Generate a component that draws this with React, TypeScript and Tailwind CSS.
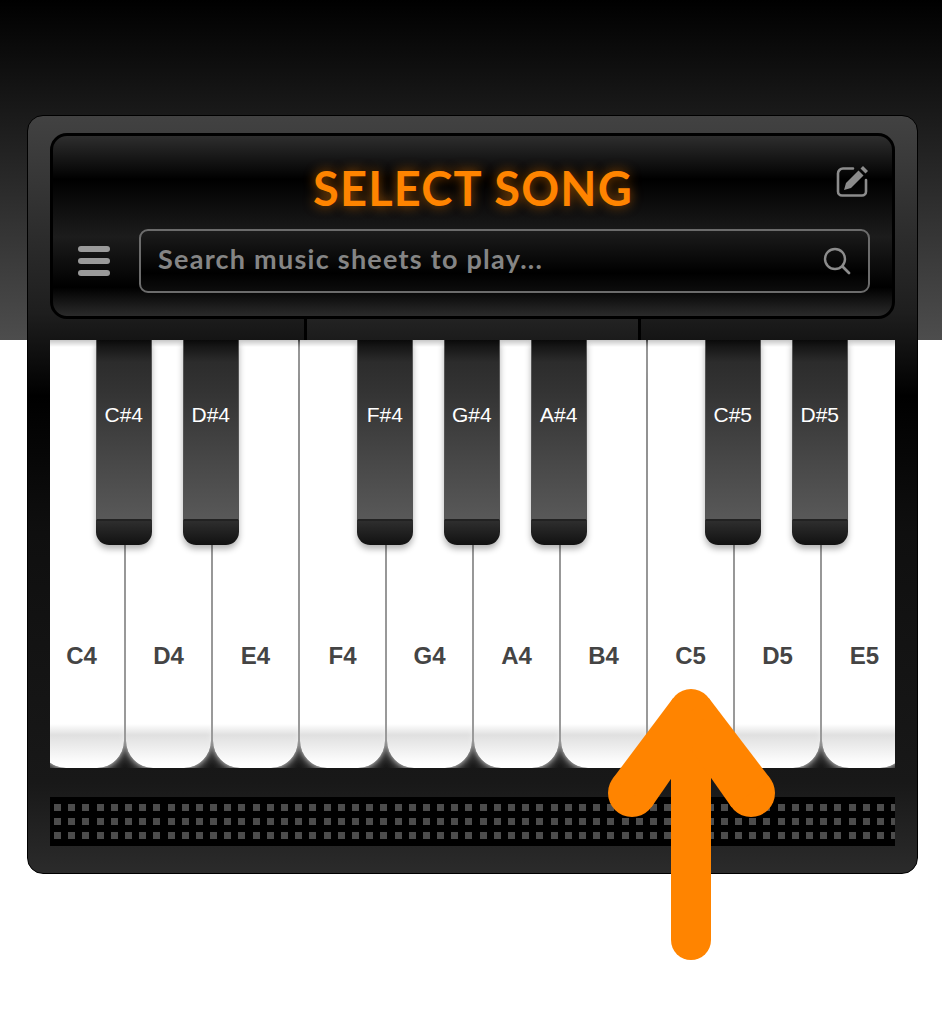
const WHITE_KEYS = ["C4", "D4", "E4", "F4", "G4", "A4", "B4", "C5", "D5", "E5"];

// left offset of each black key, relative to the keyboard
const BLACK_KEYS = [
  { label: "C#4", x: 46 },
  { label: "D#4", x: 133 },
  { label: "F#4", x: 307 },
  { label: "G#4", x: 394 },
  { label: "A#4", x: 481 },
  { label: "C#5", x: 655 },
  { label: "D#5", x: 742 },
];

function WhiteKey({ label }: { label: string }) {
  return (
    <div className="flex h-[428px] w-[85px] shrink-0 items-start justify-center rounded-b-[27px] bg-[linear-gradient(to_bottom,#fff_0,#fff_384px,#e0e0e0_395px,#fff_424px)] pt-[301px] font-['Liberation_Sans',sans-serif] text-[24px] font-bold leading-[30px] text-[#444] shadow-[0_0_5px_rgba(255,255,255,0.55),0_3px_10px_rgba(255,255,255,0.45)]">
      {label}
    </div>
  );
}

function BlackKey({ label, x }: { label: string; x: number }) {
  return (
    <div
      className="absolute top-0 flex h-[205px] w-[55.5px] flex-col overflow-hidden rounded-b-[13px] shadow-[0_4px_6px_rgba(0,0,0,0.3)]"
      style={{ left: x }}
    >
      <div className="flex h-[181px] justify-center border-b-[2px] border-x border-x-[#555] border-b-[#222] bg-[linear-gradient(to_bottom,#0d0d0d_0,#2c2c2c_22px,#333_50px,#585858_178px)] pt-[62px] font-['Liberation_Sans',sans-serif] text-[21px] leading-[26px] text-white">
        {label}
      </div>
      <div className="flex-1 bg-[linear-gradient(to_bottom,#2e2e2e,#111)]" />
    </div>
  );
}

function EditIcon() {
  return (
    <svg className="mb-[4px] mr-[2px]" width="32" height="32" viewBox="0 0 32 32" fill="none">
      <path
        d="M17 3.500H7a5 5 0 0 0-5 5v18a4 4 0 0 0 4 4h20a4 4 0 0 0 4-4V15"
        stroke="#8c8c8c"
        strokeWidth="2.600"
        strokeLinecap="round"
      />
      <path d="M8 25l2-7L22.500 5.500l5 5L15 23z" fill="#8c8c8c" />
      <path d="M24.500 3.500l2.500-2.500 5 5-2.500 2.500z" fill="#8c8c8c" />
    </svg>
  );
}

function SearchIcon() {
  return (
    <svg width="28" height="28" viewBox="0 0 28 28" fill="none">
      <circle cx="12" cy="12" r="10" stroke="#8c8c8c" strokeWidth="2.400" />
      <path d="M19.500 19.500L26 26" stroke="#8c8c8c" strokeWidth="2.800" strokeLinecap="round" />
    </svg>
  );
}

function Header() {
  return (
    <div className="h-[186px] rounded-[17px] border-[3px] border-black bg-[linear-gradient(to_bottom,#2e2e2e_0,#000_24%,#1c1c1c_56%,#000_84%,#2b2b2b_100%)] pl-[25px] pr-[22px]">
      <div className="flex h-[93px] items-center justify-between">
        <div className="w-[32px]" />
        <h1 className="mt-[12px] font-['Lato',sans-serif] text-[47px] font-bold leading-none tracking-[1.2px] text-[#ff8400] [text-shadow:0_0_12px_rgba(255,132,0,0.6)]">
          SELECT SONG
        </h1>
        <EditIcon />
      </div>
      <div className="flex items-center">
        <div className="flex w-[61px] shrink-0 flex-col gap-[6px]">
          <div className="h-[6px] w-[32px] rounded-full bg-[#9a9a9a]" />
          <div className="h-[6px] w-[32px] rounded-full bg-[#9a9a9a]" />
          <div className="h-[6px] w-[32px] rounded-full bg-[#9a9a9a]" />
        </div>
        <div className="flex h-[64px] flex-1 items-center justify-between rounded-[9px] border-2 border-[#6c6c6c] bg-[linear-gradient(to_bottom,#1c1c1c,#000_70%,#0c0c0c)] px-[17px]">
          <input
            placeholder="Search music sheets to play..."
            className="w-[600px] bg-transparent pb-[4px] font-['Lato',sans-serif] text-[27px] font-bold tracking-[1.25px] outline-none placeholder:text-[#858585]"
          />
          <SearchIcon />
        </div>
      </div>
    </div>
  );
}

function Keyboard() {
  return (
    <div className="relative h-[428px] overflow-hidden">
      <div className="-ml-[11px] flex gap-[2px]">
        {WHITE_KEYS.map((k) => (
          <WhiteKey key={k} label={k} />
        ))}
      </div>
      {BLACK_KEYS.map((k) => (
        <BlackKey key={k.label} label={k.label} x={k.x} />
      ))}
      <div className="pointer-events-none absolute inset-x-0 top-0 h-[7px] bg-[linear-gradient(to_bottom,rgba(0,0,0,0.22),rgba(0,0,0,0))]" />
    </div>
  );
}

function Speaker() {
  const dots = Array.from({ length: 180 });
  return (
    <div className="mt-[29px] h-[49px] overflow-hidden bg-black pl-[4px] pt-[7px]">
      <div className="grid grid-cols-[repeat(60,7px)] gap-x-[7.2px] gap-y-[7px]">
        {dots.map((_, i) => (
          <div key={i} className="h-[7px] w-[7px] bg-[#4c4c4c]" />
        ))}
      </div>
    </div>
  );
}

function Arrow() {
  return (
    <svg className="absolute left-0 top-0" width="942" height="1024" fill="#ff8400">
      <path d="M691 940V711" stroke="#ff8400" strokeWidth="40" strokeLinecap="round" />
      <circle cx="691" cy="711" r="22" />
      <circle cx="632" cy="793" r="24" />
      <circle cx="751" cy="793" r="24" />
      <polygon points="708.800,698 770.400,778.800 731.600,807.200 673.200,724" />
      <polygon points="673.200,698 612.600,778.800 651.400,807.200 708.800,724" />
    </svg>
  );
}

export default function App() {
  return (
    <div className="relative h-[1024px] overflow-hidden bg-[linear-gradient(to_bottom,#000_0,#4d4d4d_340px,#fff_340px,#fff_100%)] pl-[27px] pt-[115px]">
      <div className="h-[759px] w-[891px] rounded-[16px] border border-black bg-[linear-gradient(to_bottom,#424242_0,#1e1e1e_26%,#000_37%,#0f0f0f_55%,#181818_88%,#2b2b2b_100%)] px-[22px] pt-[17px]">
        <Header />
        <div className="flex h-[21px]">
          <div className="w-[257px] border-r-[3px] border-black" />
          <div className="w-[334px] border-r-[3px] border-black bg-white/[0.03]" />
          <div className="flex-1" />
        </div>
        <Keyboard />
        <Speaker />
      </div>
      <Arrow />
    </div>
  );
}
